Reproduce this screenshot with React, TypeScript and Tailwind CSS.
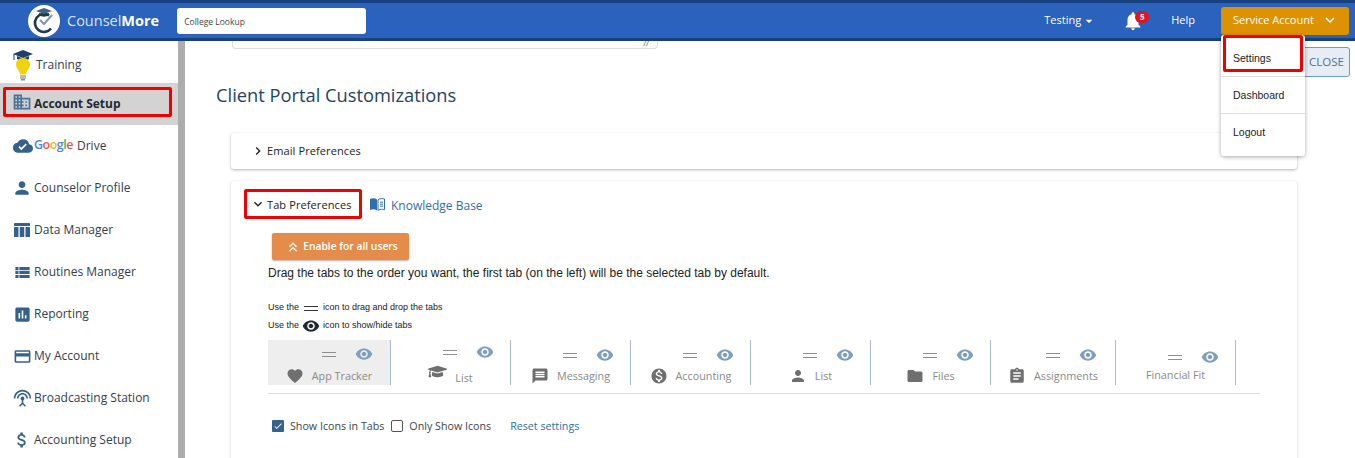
import type { ReactNode } from "react";
import { FaGraduationCap } from "react-icons/fa";
import {
  MdAssessment,
  MdAssignment,
  MdAttachMoney,
  MdCheck,
  MdCloudDone,
  MdCreditCard,
  MdDomain,
  MdFavorite,
  MdFolder,
  MdKeyboardArrowDown,
  MdKeyboardArrowRight,
  MdKeyboardDoubleArrowUp,
  MdMessage,
  MdMonetizationOn,
  MdNotifications,
  MdPerson,
  MdSettingsInputAntenna,
  MdViewList,
  MdVisibility,
  MdArrowDropDown,
} from "react-icons/md";

const openSans = "font-['Open_Sans',sans-serif]";
const arial = "font-['Liberation_Sans',Arial,sans-serif]";

function Logo() {
  return (
    <svg width="32" height="32" viewBox="0 0 32 32" className="shrink-0">
      <circle cx="16" cy="16" r="16" fill="#fff" />
      <path d="M21 10.5a9 9 0 1 0 2 13" fill="none" stroke="#1d3a4f" strokeWidth="2.6" />
      <path d="M12 15l4 4 8-9" fill="none" stroke="#7d97ad" strokeWidth="2" />
      <path d="M16 3l8 3-8 3-8-3z" fill="#43627c" />
      <path d="M11 8v2.5c3 1.500 7 1.500 10 0V8l-5 2z" fill="#1d3a4f" />
    </svg>
  );
}

function Bulb() {
  return (
    <svg width="22" height="31" viewBox="0 0 22 31" className="shrink-0">
      <path d="M11 0l10 4-10 4L1 4z" fill="#1f3d6d" />
      <path d="M5 6v3c4 2 8 2 12 0V6l-6 2.500z" fill="#1f3d6d" />
      <path d="M2 4v6" stroke="#1f3d6d" strokeWidth="1" />
      <path d="M11 8c-4.500 0-7 3-7 6.500 0 4 3.500 5.500 4 10h6c.5-4.500 4-6 4-10C18 11 15.500 8 11 8z" fill="#f2d20f" />
      <rect x="8" y="25" width="6" height="4" fill="#b9b9b9" />
      <rect x="9" y="29" width="4" height="1.500" fill="#8a8a8a" />
    </svg>
  );
}

function TableIcon() {
  return (
    <svg width="16" height="14" viewBox="0 0 16 14" fill="currentColor">
      <path d="M1 0h14a1 1 0 0 1 1 1v2H0V1a1 1 0 0 1 1-1z" />
      <rect x="0" y="4" width="4.500" height="10" rx="0.500" />
      <rect x="5.750" y="4" width="4.500" height="10" />
      <rect x="11.500" y="4" width="4.500" height="10" rx="0.500" />
    </svg>
  );
}

function BookIcon() {
  return (
    <svg width="15" height="13" viewBox="0 0 15 13" className="ml-[8px] text-[#2f6fb0]">
      <path d="M0 1C2.500 0 5 0 7 1.500v11C5 11 2.500 11 0 12z" fill="currentColor" />
      <path d="M8 1.800C10 .5 12.200 .3 14.500 1v10.600C12.200 11 10 11.200 8 12.400z" fill="none" stroke="currentColor" />
      <path d="M10 4.200h3M10 6.200h3M10 8.200h3" stroke="currentColor" />
    </svg>
  );
}

function Handle({ className = "" }: { className?: string }) {
  return (
    <span className={`flex w-[14px] flex-col gap-[3px] ${className}`}>
      <span className="h-px w-full bg-current" />
      <span className="h-px w-full bg-current" />
    </span>
  );
}

const sideItems: { label: string; icon: ReactNode }[] = [
  { label: "Counselor Profile", icon: <MdPerson size={20} /> },
  { label: "Data Manager", icon: <TableIcon /> },
  { label: "Routines Manager", icon: <MdViewList size={19} /> },
  { label: "Reporting", icon: <MdAssessment size={19} /> },
  { label: "My Account", icon: <MdCreditCard size={19} /> },
  { label: "Broadcasting Station", icon: <MdSettingsInputAntenna size={19} /> },
  { label: "Accounting Setup", icon: <MdAttachMoney size={20} /> },
];

function Sidebar() {
  return (
    <aside className={`flex w-[185px] shrink-0 border-r-[7px] border-[#adadad] ${openSans}`}>
      <nav className="w-full text-[12px] text-[#34404c]">
        <div className="flex h-[42px] items-center gap-[2px] pt-[6px] pl-[12px]">
          <Bulb />
          <span>Training</span>
        </div>
        <div className="flex h-[42px] items-center bg-[#d3d3d3] px-[3px] pb-[4px]">
          <div className="flex h-[30px] w-[169px] items-center gap-[2px] rounded-[2px] border-[3px] border-[#f00000] pl-[6px] font-bold text-[#1f2a33]">
            <MdDomain size={20} className="text-[#4b7199]" />
            <span className="pt-[4px]">Account Setup</span>
          </div>
        </div>
        <div className="flex h-[42px] items-center pl-[13px]">
          <MdCloudDone size={20} className="text-[#34618d]" />
          <span className="-mt-[1px] ml-[1px] text-[12.500px] font-semibold tracking-[-0.5px]">
            <span className="text-[#4a86e8]">G</span>
            <span className="text-[#e8564a]">o</span>
            <span className="text-[#f0b429]">o</span>
            <span className="text-[#4a86e8]">g</span>
            <span className="text-[#4caf50]">l</span>
            <span className="text-[#e8564a]">e</span>
          </span>
          <span className="ml-[4px]">Drive</span>
        </div>
        {sideItems.map((item) => (
          <div key={item.label} className="flex h-[42px] items-center">
            <span className="flex w-[34px] justify-center pl-[10px] text-[#34618d]">{item.icon}</span>
            <span>{item.label}</span>
          </div>
        ))}
      </nav>
    </aside>
  );
}

const tabs: {
  label: string;
  icon?: ReactNode;
  width: string;
  top: string;
  active?: boolean;
  labelGap: string;
  textClass?: string;
}[] = [
  { label: "App Tracker", icon: <MdFavorite size={18} />, width: "w-[123px]", top: "pt-[5px]", active: true, labelGap: "mt-[4px]" },
  { label: "List", icon: <FaGraduationCap size={19} />, width: "w-[120px]", top: "pt-[3px]", labelGap: "mt-[1px]", textClass: "translate-y-[7px]" },
  { label: "Messaging", icon: <MdMessage size={18} />, width: "w-[120px]", top: "pt-[6px]", labelGap: "mt-[3px]" },
  { label: "Accounting", icon: <MdMonetizationOn size={18} />, width: "w-[120px]", top: "pt-[6px]", labelGap: "mt-[3px]" },
  { label: "List", icon: <MdPerson size={18} />, width: "w-[120px]", top: "pt-[6px]", labelGap: "mt-[3px]" },
  { label: "Files", icon: <MdFolder size={18} />, width: "w-[120px]", top: "pt-[6px]", labelGap: "mt-[3px]" },
  { label: "Assignments", icon: <MdAssignment size={18} />, width: "w-[125px]", top: "pt-[6px]", labelGap: "mt-[3px]" },
  { label: "Financial Fit", width: "w-[120px]", top: "pt-[8px]", labelGap: "mt-[1px]" },
];

function TabStrip() {
  return (
    <div className="mx-[37px] mt-[5px] border-b border-[#dedede] pb-[8px]">
      <div className="flex h-[45px]">
        {tabs.map((tab, i) => (
          <div
            key={i}
            className={`flex ${tab.width} shrink-0 flex-col items-center border-r border-[#a9bcd3] ${tab.top} ${tab.active ? "bg-[#eeeeee]" : ""}`}
          >
            <div className="flex h-[18px] items-center gap-[19px] pl-[36px] text-[#8e8e8e]">
              <Handle />
              <MdVisibility size={18} className="text-[#7f9fbf]" />
            </div>
            <div className={`flex items-center gap-[8px] text-[10.800px] text-[#8a8a8a] ${tab.labelGap}`}>
              {tab.icon && <span className="text-[#6f6f6f]">{tab.icon}</span>}
              <span className={tab.textClass}>{tab.label}</span>
            </div>
          </div>
        ))}
      </div>
    </div>
  );
}

function Main() {
  return (
    <main className={`relative min-w-0 flex-1 ${openSans}`}>
      <div className="ml-[47px] flex h-[8px] w-[426px] items-start justify-end rounded-b-[4px] border border-t-0 border-[#dedede] pr-[8px] text-[8px] leading-[4px] text-[#555]">
        //
      </div>
      <h1 className="mt-[35px] ml-[31px] text-[18.300px] leading-[22px] font-normal text-[#1f4468]">
        Client Portal Customizations
      </h1>
      <section className="mt-[27px] mr-[58px] ml-[46px] flex h-[36px] items-center rounded-[3px] pl-[20px] text-[11px] tracking-[0.1px] text-[#222] shadow-[0_1px_3px_rgba(0,0,0,0.3)]">
        <MdKeyboardArrowRight size={16} className="-ml-[1px] mr-[1px]" />
        Email Preferences
      </section>
      <section className="mt-[12px] mr-[58px] ml-[46px] h-[300px] rounded-[3px] pt-[8px] shadow-[0_1px_3px_rgba(0,0,0,0.2)]">
        <div className="flex items-center pl-[13px]">
          <div className="flex h-[30px] w-[118px] items-center rounded-[2px] border-[3px] border-[#f00000] pl-[3px] text-[11px] tracking-[0.1px] whitespace-nowrap text-[#222]">
            <MdKeyboardArrowDown size={16} />
            <span className="pt-[3px] pl-[1px]">Tab Preferences</span>
          </div>
          <BookIcon />
          <span className="mt-[3px] ml-[6px] text-[12px] text-[#2f6fb0]">Knowledge Base</span>
        </div>
        <button className="mt-[14px] ml-[41px] flex h-[27px] w-[137px] items-center justify-center gap-[2px] rounded-[2px] bg-[#e58c4a] pl-[2px] text-[10.300px] font-semibold text-white shadow-[0_1px_2px_rgba(0,0,0,0.3)]">
          <MdKeyboardDoubleArrowUp size={16} />
          Enable for all users
        </button>
        <p className={`mt-[6px] ml-[37px] text-[12px] leading-[14px] text-[#222] ${arial}`}>
          Drag the tabs to the order you want, the first tab (on the left) will be the selected tab by default.
        </p>
        <div className={`mt-[19px] ml-[37px] text-[9px] text-[#222] ${arial}`}>
          <div className="flex h-[18px] items-center">
            Use the
            <Handle className="mx-[5px] text-[#333]" />
            icon to drag and drop the tabs
          </div>
          <div className="flex h-[18px] items-center">
            Use the
            <MdVisibility size={18} className="mx-[3px] text-[#1f2a33]" />
            icon to show/hide tabs
          </div>
        </div>
        <TabStrip />
        <div className="mt-[24px] ml-[41px] flex h-[16px] items-center text-[10.700px] text-[#3c4650]">
          <span className="flex h-[12px] w-[12px] items-center justify-center rounded-[1px] bg-[#34618d] text-white">
            <MdCheck size={10} />
          </span>
          <span className="ml-[6px]">Show Icons in Tabs</span>
          <span className="ml-[7px] h-[12px] w-[12px] rounded-[2px] border border-[#555]" />
          <span className="ml-[6px]">Only Show Icons</span>
          <span className="ml-[19px] text-[#2f6fa8]">Reset settings</span>
        </div>
      </section>
      <button className="absolute top-[6px] right-[5px] h-[30px] w-[50px] rounded-[3px] border border-[#6a9cc4] bg-[#e6edf4] pl-[8px] text-left text-[11.500px] text-[#4b7199]">
        CLOSE
      </button>
      <div className={`absolute top-[-6px] right-[50px] flex w-[84px] flex-col rounded-[3px] bg-white pb-[6px] text-[10.500px] text-[#222] shadow-[0_1px_4px_rgba(0,0,0,0.35)] ${arial}`}>
        <div className="flex h-[37px] items-center px-[2px]">
          <div className="flex h-[37px] w-[80px] items-center rounded-[2px] border-[3px] border-[#f00000] pt-[11px] pl-[7px]">Settings</div>
        </div>
        <div className="mt-[4px] flex h-[38px] items-center border-y border-[#dedede] pt-[2px] pl-[12px]">Dashboard</div>
        <div className="flex h-[36px] items-center pt-[2px] pl-[12px]">Logout</div>
      </div>
    </main>
  );
}

export default function App() {
  return (
    <div className="flex h-[458px] w-[1355px] flex-col overflow-hidden bg-white">
      <header className={`flex h-[41px] shrink-0 items-center border-y-[3px] border-[#17427f] bg-[#2b62bd] ${openSans}`}>
        <div className="ml-[28px]">
          <Logo />
        </div>
        <span className="ml-[7px] text-[14.500px] text-[#d9e5f5]">
          Counsel<span className="font-bold text-white">More</span>
        </span>
        <div className="ml-[18px] flex h-[26px] w-[189px] items-center rounded-[3px] bg-white pt-[3px] pl-[7px] text-[8.500px] text-[#444]">
          College Lookup
        </div>
        <div className="ml-auto flex items-center text-[11px] text-white">
          <span className="pb-[1px]">Testing</span>
          <MdArrowDropDown size={16} />
          <span className="relative ml-[25px]">
            <MdNotifications size={22} />
            <span className="absolute top-[1px] left-[13px] flex h-[12px] w-[14px] items-center justify-center rounded-full bg-[#e8101c] text-[8px] font-bold">5</span>
          </span>
          <span className="ml-[27px] pb-[1px]">Help</span>
          <div className="mr-[6px] ml-[26px] flex h-[28px] w-[128px] items-center rounded-[3px] bg-[#dd9202] pb-[1px] pl-[12px]">
            Service Account
            <MdKeyboardArrowDown size={18} className="ml-[7px]" />
          </div>
        </div>
      </header>
      <div className="flex min-h-0 flex-1">
        <Sidebar />
        <Main />
      </div>
    </div>
  );
}
